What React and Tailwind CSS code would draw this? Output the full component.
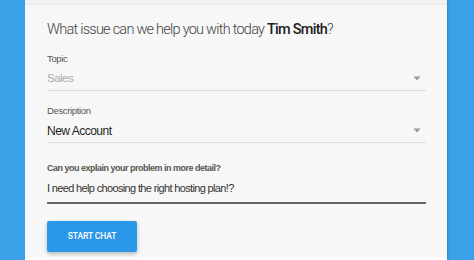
import React from "react";

function Caret() {
  return (
    <svg width="8" height="5" viewBox="0 0 8 5" className="shrink-0">
      <path d="M0.5 0.5h7L4 4.5z" fill="#9a9a9a" />
    </svg>
  );
}

function SelectField({ label, value, muted }) {
  return (
    <div className="flex flex-col">
      <div className="h-[12px] flex items-center text-[9.5px] tracking-[-0.35px] text-[#555]">
        {label}
      </div>
      <div className="mt-[5px] h-[17px] flex items-center justify-between pr-[5px]">
        <span
          className={
            muted
              ? "text-[11.5px] tracking-[-0.5px] text-[#aaa]"
              : "text-[12px] tracking-[-0.5px] text-[#1e1e1e]"
          }
        >
          {value}
        </span>
        <Caret />
      </div>
      <div className="mt-[3px] h-px bg-[#dcdcdc]" />
    </div>
  );
}

export default function App() {
  return (
    <div
      className="w-[474px] h-[260px] bg-[#3ba1e8] pl-[25px] overflow-hidden"
      style={{ fontFamily: '"Liberation Sans", Arial, sans-serif' }}
    >
      <div className="w-[422px] h-[260px] flex flex-col bg-white shadow-[1px_0_2px_rgba(0,0,0,0.18)]">
        <div className="h-[5px] bg-[#f1f1f1] border-b border-[#e9e9e9]" />
        <div className="h-[252px] bg-[#f7f7f7] pl-[22px] pr-[21px] flex flex-col">
          <h1
            className="mt-[15px] h-[20px] flex items-center text-[14.5px] font-light text-[#444] tracking-[-0.75px]"
            style={{ fontFamily: "Roboto, sans-serif" }}
          >
            <span>
              What issue can we help you with today{" "}
              <span className="font-medium text-[#222]">Tim Smith</span>?
            </span>
          </h1>

          <div className="mt-[13px]">
            <SelectField label="Topic" value="Sales" muted />
          </div>
          <div className="mt-[14px]">
            <SelectField label="Description" value="New Account" />
          </div>

          <div className="mt-[20px] h-[12px] flex items-center text-[9px] font-bold tracking-[-0.5px] text-[#555]">
            Can you explain your problem in more detail?
          </div>
          <div className="mt-[4px] h-[18px] flex items-center text-[11px] tracking-[-0.65px] text-[#333]">
            I need help choosing the right hosting plan!?
          </div>
          <div className="mt-[5px] h-[2px] bg-[#666]" />

          <button
            className="mt-[17px] w-[90px] h-[31px] bg-[#2b97e8] rounded-[2px] text-white text-[8.5px] font-medium uppercase tracking-[-0.1px] shadow-[0_2px_4px_rgba(0,0,0,0.25)]"
            style={{ fontFamily: "Roboto, sans-serif" }}
          >
            Start Chat
          </button>
        </div>
      </div>
    </div>
  );
}
